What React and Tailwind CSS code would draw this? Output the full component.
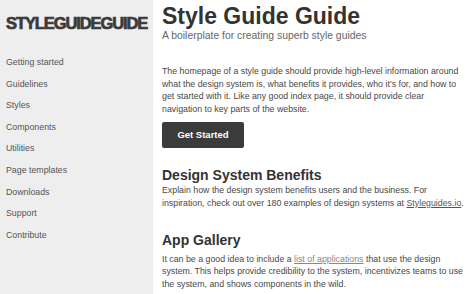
const navItems = [
  'Getting started',
  'Guidelines',
  'Styles',
  'Components',
  'Utilities',
  'Page templates',
  'Downloads',
  'Support',
  'Contribute',
]

export default function App() {
  return (
    <div className="flex w-[474px] h-[294px] overflow-hidden bg-white font-['Liberation_Sans',Arial,sans-serif]">
      {/* sidebar */}
      <aside className="w-[153px] shrink-0 bg-[#eeeeee] pl-[6px] pt-[15px]">
        <div className="text-[16.5px] font-bold tracking-[-1.1px] leading-[17px] text-[#3a3a3a] [-webkit-text-stroke:0.7px_#3a3a3a]">
          STYLEGUIDEGUIDE
        </div>
        <nav className="mt-[20px] flex flex-col">
          {navItems.map((item) => (
            <a key={item} href="#" className="text-[8.8px] leading-[21.6px] text-[#555555]">
              {item}
            </a>
          ))}
        </nav>
      </aside>

      {/* main */}
      <main className="flex-1 pl-[9px] pr-[8px] pt-[3px] text-[#484848]">
        <h1 className="text-[23px] font-bold leading-[26px] text-[#333333]">Style Guide Guide</h1>
        <p className="text-[10.4px] leading-[13px] text-[#666666]">A boilerplate for creating superb style guides</p>

        <p className="mt-[23px] text-[8.8px] leading-[12.6px]">
          The homepage of a style guide should provide high-level information around what the design system is, what benefits it provides, who it’s for, and how to get started with it. Like any good index page, it should provide clear
          <br />
          navigation to key parts of the website.
        </p>

        <button className="mt-[7px] w-[82px] h-[26px] rounded-[2px] bg-[#3b3b3b] text-white text-[9.5px] font-bold">
          Get Started
        </button>

        <h2 className="mt-[19px] text-[14px] font-bold leading-[16px] text-[#333333]">Design System Benefits</h2>
        <p className="mt-[1px] text-[8.8px] leading-[12.6px]">
          Explain how the design system benefits users and the business. For inspiration, check out over 180 examples of design systems at{' '}
          <a href="#" className="underline text-[#555555]">Styleguides.io</a>.
        </p>

        <h2 className="mt-[22px] text-[14px] font-bold leading-[16px] text-[#333333]">App Gallery</h2>
        <p className="mt-[5px] text-[8.8px] leading-[12.6px]">
          It can be a good idea to include a{' '}
          <a href="#" className="underline text-[#888888]">list of applications</a> that use the design system. This helps provide credibility to the system, incentivizes teams to use the system, and shows components in the wild.
        </p>
      </main>
    </div>
  )
}
